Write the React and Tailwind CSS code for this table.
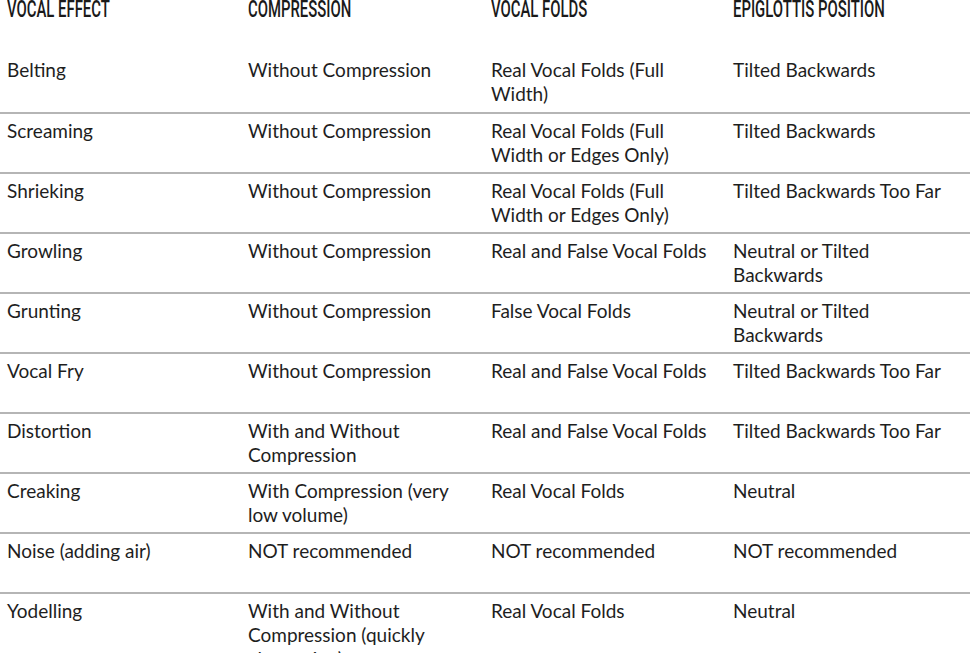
const rows = [
  ['Belting', 'Without Compression', 'Real Vocal Folds (Full Width)', 'Tilted Backwards'],
  ['Screaming', 'Without Compression', 'Real Vocal Folds (Full Width or Edges Only)', 'Tilted Backwards'],
  ['Shrieking', 'Without Compression', 'Real Vocal Folds (Full Width or Edges Only)', 'Tilted Backwards Too Far'],
  ['Growling', 'Without Compression', 'Real and False Vocal Folds', 'Neutral or Tilted Backwards'],
  ['Grunting', 'Without Compression', 'False Vocal Folds', 'Neutral or Tilted Backwards'],
  ['Vocal Fry', 'Without Compression', 'Real and False Vocal Folds', 'Tilted Backwards Too Far'],
  ['Distortion', 'With and Without Compression', 'Real and False Vocal Folds', 'Tilted Backwards Too Far'],
  ['Creaking', 'With Compression (very low volume)', 'Real Vocal Folds', 'Neutral'],
  ['Noise (adding air)', 'NOT recommended', 'NOT recommended', 'NOT recommended'],
  ['Yodelling', 'With and Without Compression (quickly alternating)', 'Real Vocal Folds', 'Neutral'],
]

const headers = ['Vocal Effect', 'Compression', 'Vocal Folds', 'Epiglottis Position']

export default function App() {
  return (
    <div className="w-[970px] h-[653px] overflow-hidden bg-white">
      <table className="w-[970px] table-fixed border-collapse -mt-[7px]">
        <colgroup>
          <col className="w-[241px]" />
          <col className="w-[243px]" />
          <col className="w-[242px]" />
          <col className="w-[244px]" />
        </colgroup>
        <thead>
          <tr className="h-[60px]">
            {headers.map((h) => (
              <th
                key={h}
                className="align-top text-left pl-[7px] pr-2 pt-[1px] font-normal whitespace-nowrap"
              >
                <span className="inline-block origin-left scale-x-[0.62] uppercase font-medium text-[24px] leading-[30px] text-[#1a1a1a] font-['Roboto',sans-serif]">
                  {h}
                </span>
              </th>
            ))}
          </tr>
        </thead>
        <tbody>
          {rows.map((r, i) => (
            <tr key={i} className={`h-[60px] ${i < rows.length - 1 ? 'border-b-2 border-[#b5b5b5]' : ''}`}>
              {r.map((c, j) => (
                <td
                  key={j}
                  className="align-top pl-[7px] pr-3 pt-[5px] text-[19px] leading-[24px] text-[#1e1e1e] font-['Lato','Open_Sans',sans-serif]"
                >
                  {c}
                </td>
              ))}
            </tr>
          ))}
        </tbody>
      </table>
    </div>
  )
}
